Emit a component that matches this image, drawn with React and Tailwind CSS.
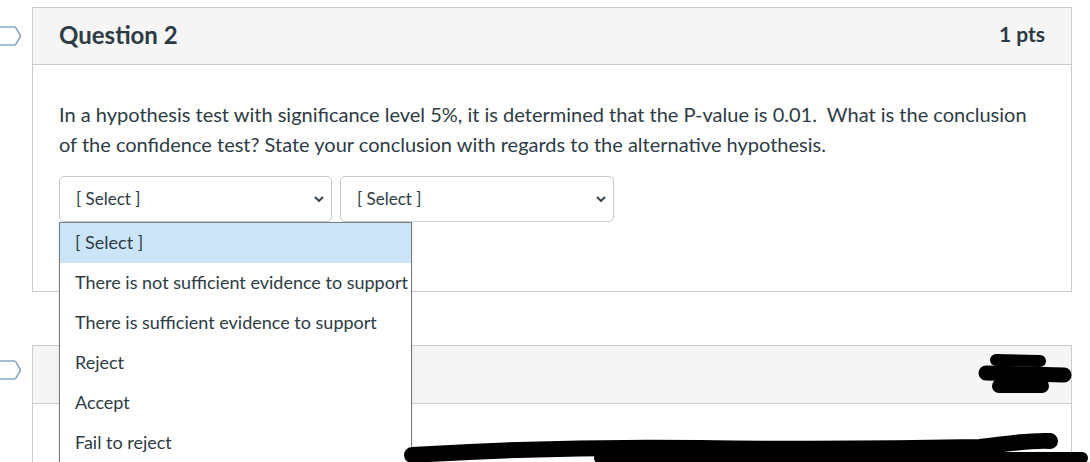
import React from "react";

const options = [
  "[ Select ]",
  "There is not sufficient evidence to support",
  "There is sufficient evidence to support",
  "Reject",
  "Accept",
  "Fail to reject",
];

function Bookmark() {
  return (
    <svg width="24" height="22" viewBox="0 0 24 22" className="shrink-0">
      <path
        d="M-4 2 H14 Q15 2 16 3 L20 10 Q20.6 11 20 12 L16 19 Q15 20 14 20 H-4"
        fill="none"
        stroke="#8aa6c1"
        strokeWidth="1.6"
      />
    </svg>
  );
}

function Chevron() {
  return (
    <svg width="12" height="12" viewBox="0 0 12 12">
      <path d="M2 4 L6 8 L10 4" fill="none" stroke="#2d3b45" strokeWidth="1.8" />
    </svg>
  );
}

function Select({ width }) {
  return (
    <div
      className={`h-[46px] ${width} border border-[#c7cdd1] rounded-[5px] bg-white flex items-center justify-between pl-4 pr-[6px] text-[17px] text-[#2d3b45]`}
    >
      <span>[ Select ]</span>
      <Chevron />
    </div>
  );
}

export default function App() {
  return (
    <div
      className="relative w-[1090px] h-[462px] overflow-hidden bg-white text-[#2d3b45]"
      style={{ fontFamily: "Lato, 'Noto Sans', sans-serif" }}
    >
      <div className="pt-[7px] flex flex-col gap-[53px]">
        {/* Question 2 */}
        <div className="flex">
          <div className="w-[32px] pt-[18px] shrink-0">
            <Bookmark />
          </div>
          <div className="w-[1040px] h-[285px] border border-[#c7cdd1]">
            <div className="h-[57px] bg-[#f5f5f5] border-b border-[#c7cdd1] flex items-center justify-between pl-[26px] pr-[26px] pb-[2px]">
              <h2 className="text-[24px] font-bold">Question 2</h2>
              <span className="text-[21px] font-bold mb-[3px]">1 pts</span>
            </div>
            <div className="pl-[26px] pt-[34px]">
              <p className="text-[20px] leading-[30px] whitespace-nowrap">
                In a hypothesis test with significance level 5%, it is determined that the P-value is 0.01.&nbsp; What is the conclusion
                <br />
                of the confidence test? State your conclusion with regards to the alternative hypothesis.
              </p>
              <div className="mt-[17px] flex gap-[8px] relative">
                <Select width="w-[273px]" />
                <Select width="w-[274px]" />
                <div className="absolute left-0 top-[46px] w-[353px] border border-[#7a7a7a] bg-white z-10 shadow-sm">
                  {options.map((o, i) => (
                    <div
                      key={o}
                      className={`h-[40px] flex items-center pl-[15px] pb-[2px] text-[18px] whitespace-nowrap ${
                        i === 0 ? "bg-[#cce4f8]" : ""
                      }`}
                    >
                      {o}
                    </div>
                  ))}
                </div>
              </div>
            </div>
          </div>
        </div>

        {/* next question */}
        <div className="flex">
          <div className="w-[32px] pt-[14px] shrink-0">
            <Bookmark />
          </div>
          <div className="w-[1040px] h-[200px] border border-[#c7cdd1]">
            <div className="h-[58px] bg-[#f5f5f5] border-b border-[#c7cdd1]" />
          </div>
        </div>
      </div>

      {/* redaction marks */}
      <svg
        className="absolute inset-0 pointer-events-none z-20"
        width="1090"
        height="462"
        viewBox="0 0 1090 462"
      >
        <g stroke="#000" strokeLinecap="round" strokeLinejoin="round" fill="none">
          <path d="M996 360 L1040 361" strokeWidth="12" />
          <path d="M986 373 L1064 375" strokeWidth="15" />
          <path d="M999 386 L1042 386" strokeWidth="14" />
          <path d="M412 455 Q560 446 700 448 T980 447 Q1030 440 1050 441" strokeWidth="16" />
          <path d="M600 458 L1082 458" strokeWidth="12" />
        </g>
      </svg>
    </div>
  );
}
